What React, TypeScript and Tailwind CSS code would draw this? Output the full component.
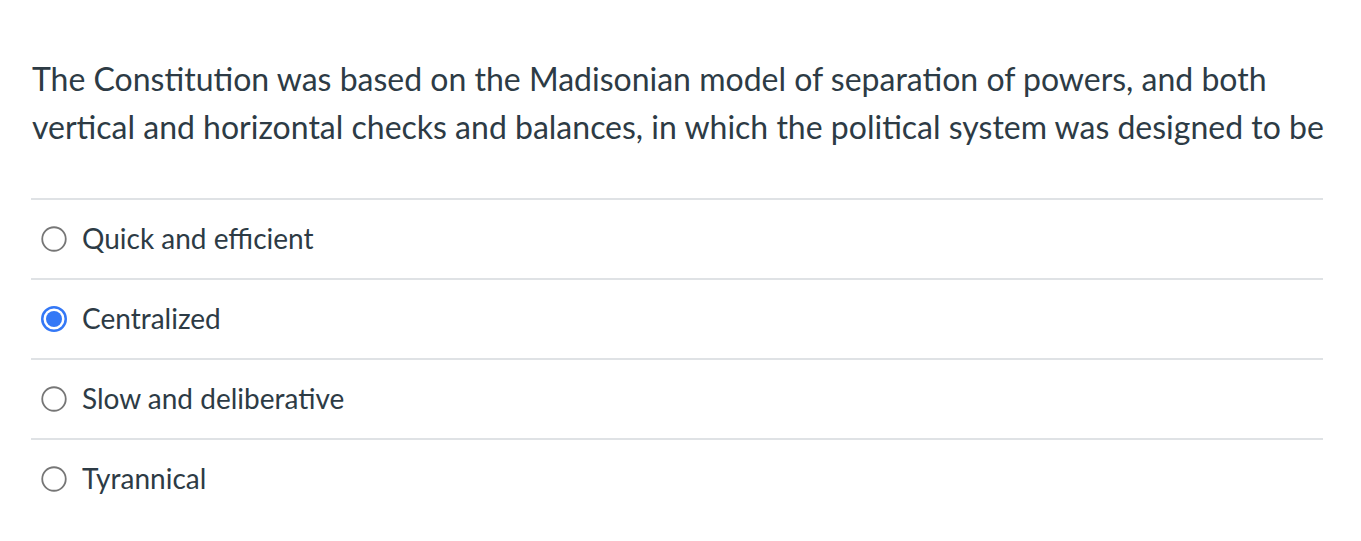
import React from "react";

const options = [
  { label: "Quick and efficient", checked: false },
  { label: "Centralized", checked: true },
  { label: "Slow and deliberative", checked: false },
  { label: "Tyrannical", checked: false },
];

function Radio({ checked }: { checked: boolean }) {
  if (checked) {
    return (
      <svg width="26" height="26" viewBox="0 0 26 26" className="shrink-0">
        <circle cx="13" cy="13" r="11.75" fill="white" stroke="#3478f6" strokeWidth="2.5" />
        <circle cx="13" cy="13" r="8" fill="#3478f6" />
      </svg>
    );
  }
  return (
    <svg width="26" height="26" viewBox="0 0 26 26" className="shrink-0">
      <circle cx="13" cy="13" r="11.75" fill="white" stroke="#767676" strokeWidth="1.8" />
    </svg>
  );
}

export default function App() {
  return (
    <div className="w-[1361px] h-[541px] bg-white text-[#2d3b45]" style={{ fontFamily: "Lato, 'Noto Sans', sans-serif" }}>
      <div className="pl-[32px] pr-[38px] pt-[55px]">
        <p className="text-[32px] leading-[48px] pb-[47px] -mr-[20px]">
          The Constitution was based on the Madisonian model of separation of powers, and both vertical and horizontal checks and balances, in which the political system was designed to be
        </p>
        <div className="-ml-[1px]">
          {options.map((o) => (
            <div key={o.label} className="border-t-2 border-[#dfe2e5] h-[80px] flex items-center gap-[15px] pl-[10px]">
              <Radio checked={o.checked} />
              <span className="text-[28px] leading-none -mt-[3px]">{o.label}</span>
            </div>
          ))}
        </div>
      </div>
    </div>
  );
}
